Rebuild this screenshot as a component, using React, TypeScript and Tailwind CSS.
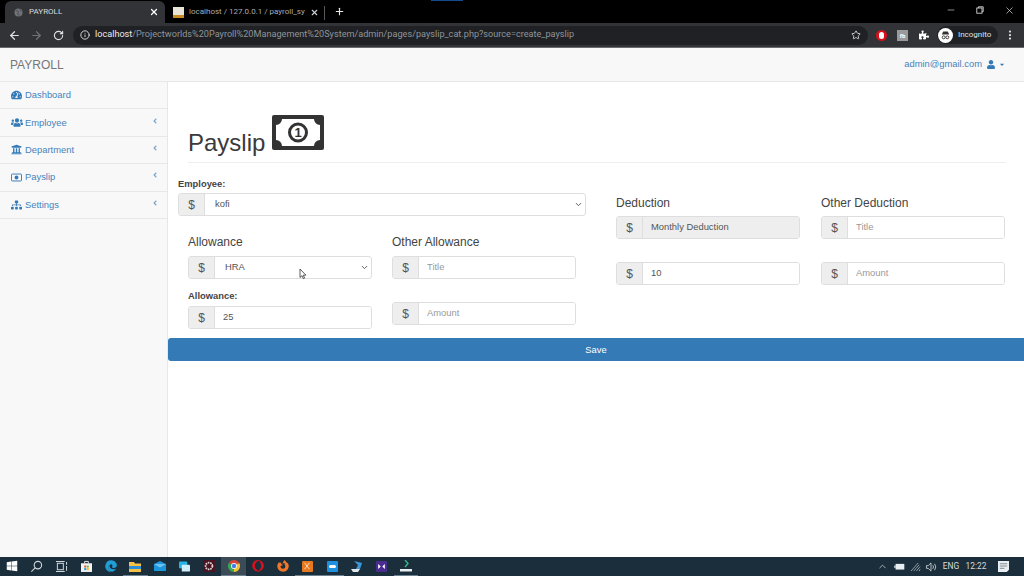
import React from "react";
import { ArrowLeft, ArrowRight, RotateCw, Info, Star, X, Plus, Minus, MoreVertical, ChevronUp, ChevronDown } from "lucide-react";
import { FaTachometerAlt, FaUsers, FaUniversity, FaSitemap, FaAngleLeft, FaUser, FaCaretDown, FaPuzzlePiece, FaWindows, FaFirefoxBrowser, FaEdge, FaOpera } from "react-icons/fa";

const MoneyIcon = ({ className }: { className?: string }) => (
  <svg viewBox="0 0 52 35" className={className}>
    <rect width="52" height="35" rx="2" fill="#333" />
    <path fill="#fff" d="M10 4H42A6 6 0 0 0 48 10V25A6 6 0 0 0 42 31H10A6 6 0 0 0 4 25V10A6 6 0 0 0 10 4Z" />
    <circle cx="26" cy="17.5" r="8.5" fill="#fff" stroke="#333" strokeWidth="3" />
    <text x="26" y="22" textAnchor="middle" fontSize="13" fontWeight="700" fill="#333" fontFamily="Liberation Sans, sans-serif">1</text>
  </svg>
);

const SmallMoney = () => (
  <svg viewBox="0 0 14 10" className="w-[11px] h-[9px]">
    <rect x="0.6" y="0.6" width="12.8" height="8.8" rx="1" fill="none" stroke="#337ab7" strokeWidth="1.2" />
    <circle cx="7" cy="5" r="2.4" fill="#337ab7" />
  </svg>
);

const ChromeLogo = () => (
  <svg viewBox="0 0 12 12" className="w-[12px] h-[12px]">
    <path d="M6 6 .8 3A6 6 0 0 1 11.200 3Z" fill="#d9453a" />
    <path d="M6 6 11.200 3A6 6 0 0 1 6 12Z" fill="#f2c232" />
    <path d="M6 6V12A6 6 0 0 1 .8 3Z" fill="#3aa757" />
    <circle cx="6" cy="6" r="2.900" fill="#fff" />
    <circle cx="6" cy="6" r="2.200" fill="#3f7fe8" />
  </svg>
);

const Group = ({ children, className = "" }: { children: React.ReactNode; className?: string }) => (
  <div className={`flex h-[23px] rounded-[3px] border border-[#dedede] overflow-hidden bg-white ${className}`}>
    <span className="w-[26px] shrink-0 bg-[#eeeeee] border-r border-[#dedede] flex items-center justify-center text-[12px] text-[#555]">$</span>
    {children}
  </div>
);

const Field = ({ value, placeholder, disabled }: { value?: string; placeholder?: string; disabled?: boolean }) => (
  <input
    readOnly
    defaultValue={value}
    placeholder={placeholder}
    disabled={disabled}
    className={`w-full min-w-0 px-2 text-[9.4px] text-[#555] placeholder:text-[#999] outline-none ${disabled ? "bg-[#eeeeee] opacity-100" : "bg-white"}`}
  />
);

const Picker = ({ value }: { value: string }) => (
  <>
    <select defaultValue={value} className="appearance-none flex-1 min-w-0 pl-[10px] text-[9.4px] text-[#555] bg-white outline-none">
      <option>{value}</option>
    </select>
    <span className="w-[13px] shrink-0 flex items-center justify-center">
      <ChevronDown className="w-[9px] h-[9px] text-[#555]" strokeWidth={2.5} />
    </span>
  </>
);

const nav = [
  { label: "Dashboard", icon: <FaTachometerAlt className="w-[11px] h-[10px]" />, arrow: false },
  { label: "Employee", icon: <FaUsers className="w-[12px] h-[11px]" />, arrow: true },
  { label: "Department", icon: <FaUniversity className="w-[11px] h-[11px]" />, arrow: true },
  { label: "Payslip", icon: <SmallMoney />, arrow: true },
  { label: "Settings", icon: <FaSitemap className="w-[11px] h-[10px]" />, arrow: true },
];

const Tile = ({ c, children }: { c: string; children?: React.ReactNode }) => (
  <span className="w-[11px] h-[11px] rounded-[1px] flex items-center justify-center" style={{ background: c }}>{children}</span>
);

const taskIcons: { el: React.ReactNode; line?: boolean; active?: boolean }[] = [
  { el: <FaWindows className="w-[12px] h-[12px] text-white" /> },
  { el: <svg viewBox="0 0 14 14" className="w-[13px] h-[13px]" fill="none" stroke="#cfd6da" strokeWidth="1.2"><circle cx="8.5" cy="5.5" r="4" /><path d="M5.5 8.5 1.5 12.5" /></svg> },
  { el: <svg viewBox="0 0 14 12" className="w-[13px] h-[11px]" fill="none" stroke="#cfd6da" strokeWidth="1.1"><rect x="2.5" y="2.5" width="6.5" height="7" /><path d="M1 .6h9.5M1 11.400h9.500M12.500 1v3M12.500 5.500v5" /></svg> },
  { el: <svg viewBox="0 0 12 13" className="w-[11px] h-[12px]"><path d="M0 3.500h12V13H0z" fill="#f2f2f2" /><path d="M4 3.500V1.500h4v2" fill="none" stroke="#f2f2f2" /><rect x="3.500" y="6" width="2.200" height="2.200" fill="#e8562a" /><rect x="6.300" y="6" width="2.200" height="2.200" fill="#7db53b" /><rect x="3.500" y="8.800" width="2.200" height="2.200" fill="#1d9ad6" /><rect x="6.300" y="8.800" width="2.200" height="2.200" fill="#f4b728" /></svg> },
  { el: <FaEdge className="w-[12px] h-[12px] text-[#1f9fd6]" /> },
  { el: <svg viewBox="0 0 12 11" className="w-[12px] h-[11px]"><path d="M0 1h5l1 1.500h6V11H0z" fill="#f3c246" /><rect x="0" y="5" width="12" height="3" fill="#2c8fd6" /></svg>, line: true },
  { el: <svg viewBox="0 0 12 10" className="w-[12px] h-[10px]"><path d="M0 3 6 0l6 3v7H0z" fill="#1f95dc" /><path d="M0 3l6 3.500L12 3" fill="#6cc3f0" /></svg> },
  { el: <svg viewBox="0 0 12 11" className="w-[11px] h-[11px]"><rect width="9" height="7.500" rx="1" fill="#27b5e6" /><rect x="3" y="3.500" width="9" height="7.500" rx="1" fill="#cfeefa" /></svg> },
  { el: <svg viewBox="0 0 12 12" className="w-[12px] h-[12px]"><rect width="12" height="12" fill="#4a1420" /><circle cx="6" cy="6" r="3.400" fill="none" stroke="#d8d8d8" strokeWidth="1.800" strokeDasharray="1.600 .8" /></svg> },
  { el: <ChromeLogo />, active: true, line: true },
  { el: <FaOpera className="w-[12px] h-[12px] text-[#d4121e]" /> },
  { el: <FaFirefoxBrowser className="w-[12px] h-[12px] text-[#f0762a]" /> },
  { el: <Tile c="#e9791f"><svg viewBox="0 0 10 10" className="w-[8px] h-[8px]" fill="none" stroke="#f8dcc0" strokeWidth="1.200"><path d="M2 1 8 9M8 1 2 9" /></svg></Tile>, line: true },
  { el: <Tile c="#1f8fe0"><span className="w-[7px] h-[3px] bg-white rounded-full" /></Tile>, line: true },
  { el: <svg viewBox="0 0 12 11" className="w-[12px] h-[11px]"><path d="M3 0 11 2 9 8H5L7 4Z" fill="#3d9ad6" /><path d="M0 8h9l-2 3H2z" fill="#dfe7ec" /></svg> },
  { el: <Tile c="#4a2c91"><svg viewBox="0 0 8 6" className="w-[7px] h-[5px]" fill="#fff"><path d="M0 0l3 3-3 3zM8 0 5 3l3 3z" /></svg></Tile> },
  { el: <svg viewBox="0 0 12 12" className="w-[12px] h-[12px]"><path d="M5 0l3 3.500L5 7" fill="none" stroke="#33b98a" strokeWidth="1.400" /><path d="M0 9h12v2.500H0z" fill="#e8eef1" /></svg>, line: true },
];

export default function App() {
  return (
    <div className="w-[1024px] h-[576px] overflow-hidden flex flex-col bg-white font-['Liberation_Sans',Arial,sans-serif] text-[#333]">
      {/* tab strip */}
      <div className="h-[23px] shrink-0 bg-black flex items-end pl-[5px] text-[8px] font-['Roboto',sans-serif]">
        <div className="w-[160px] h-[22px] bg-[#323336] rounded-t-[6px] flex items-center pl-[9px] pr-[6px] text-[#d8dadd]">
          <svg viewBox="0 0 10 10" className="w-[9px] h-[9px]"><circle cx="5" cy="5" r="4.500" fill="#6f7276" /><path d="M2 2.500 5 4 4 7 6.500 8M6 1l2 3" stroke="#4a4c50" fill="none" /></svg>
          <span className="ml-[6px] flex-1">PAYROLL</span>
          <X className="w-[10px] h-[10px] text-white" strokeWidth={3} />
        </div>
        <div className="w-[156px] h-[22px] ml-[7px] flex items-center pl-[1px] text-[#a9acb0]">
          <span className="w-[11px] h-[11px] bg-[#e9e4d8] border-b-[3px] border-[#c98a22] shrink-0" />
          <span className="ml-[5px] w-[120px] whitespace-nowrap">localhost / 127.0.0.1 / payroll_sy</span>
          <X className="w-[9px] h-[9px] ml-[1px] text-[#d0d2d5]" strokeWidth={3} />
        </div>
        <div className="w-px h-[14px] bg-[#55575b] mb-[3px] -ml-[4px]" />
        <Plus className="w-[11px] h-[11px] text-[#e8eaed] ml-[9px] mb-[6px]" strokeWidth={2.5} />
        <div className="flex-1 h-full flex items-start">
          <div className="ml-[86px] w-[32px] h-px bg-[#174a8c]" />
        </div>
        <div className="flex self-stretch items-center text-[#d8dadd] pb-[3px]">
          <Minus className="w-[10px] h-[10px] mr-[20px]" strokeWidth={1.5} />
          <svg viewBox="0 0 10 10" className="w-[8px] h-[8px] mr-[20px]" fill="none" stroke="currentColor" strokeWidth="1.100"><rect x="1" y="2.500" width="6.500" height="6.500" /><path d="M3 2.500V1h6v6H7.500" /></svg>
          <X className="w-[11px] h-[11px] mr-[9px]" strokeWidth={1.5} />
        </div>
      </div>
      {/* toolbar */}
      <div className="h-[25px] shrink-0 bg-[#323336] border-b border-[#6a6b6e] flex items-center pl-[8px] font-['Roboto',sans-serif]">
        <ArrowLeft className="w-[13px] h-[13px] text-[#dfe1e4]" strokeWidth={2.2} />
        <ArrowRight className="w-[13px] h-[13px] ml-[9px] text-[#6f7175]" strokeWidth={2.2} />
        <RotateCw className="w-[11px] h-[11px] ml-[10px] text-[#dfe1e4]" strokeWidth={2.4} />
        <div className="ml-[9px] w-[795px] h-[19px] rounded-full bg-[#202124] flex items-center pl-[7px] pr-[7px]">
          <Info className="w-[10px] h-[10px] text-[#dfe1e4]" strokeWidth={2.2} />
          <span className="ml-[5px] flex-1 whitespace-nowrap text-[9.15px] text-[#8f959b]"><span className="text-[#e8eaed]">localhost</span>/Projectworlds%20Payroll%20Management%20System/admin/pages/payslip_cat.php?source=create_payslip</span>
          <Star className="w-[10px] h-[10px] text-[#dfe1e4]" strokeWidth={2} />
        </div>
        <span className="ml-[8px] w-[11px] h-[11px] rounded-full bg-[#d8101a] flex items-center justify-center"><span className="w-[5px] h-[7px] rounded-full bg-white" /></span>
        <span className="ml-[10px] w-[11px] h-[11px] bg-[#9a9a9a] text-[6px] leading-[11px] text-center text-white font-bold">fb</span>
        <FaPuzzlePiece className="ml-[11px] w-[10px] h-[10px] text-white" />
        <div className="ml-[8px] w-[61px] h-[18px] rounded-full bg-[#202124] flex items-center pl-[1px] text-[8px] text-[#dfe1e4]">
          <span className="w-[15px] h-[15px] rounded-full bg-white flex items-center justify-center">
            <svg viewBox="0 0 12 12" className="w-[11px] h-[11px]"><path d="M2 5h8L8.500 1.500h-5z" fill="#333" /><circle cx="4" cy="8" r="1.600" fill="none" stroke="#333" /><circle cx="8" cy="8" r="1.600" fill="none" stroke="#333" /></svg>
          </span>
          <span className="ml-[5px]">Incognito</span>
        </div>
        <MoreVertical className="ml-[6px] w-[12px] h-[12px] text-[#dfe1e4]" strokeWidth={2.5} />
      </div>
      {/* navbar */}
      <div className="h-[34px] shrink-0 bg-[#f8f8f8] border-b border-[#e7e7e7] flex items-center justify-between pl-[10px] pr-[19px]">
        <span className="text-[12px] text-[#777] mt-[1px]">PAYROLL</span>
        <span className="flex items-center text-[9.4px] text-[#4583bb]">
          admin@gmail.com
          <FaUser className="ml-[5px] w-[8px] h-[9px] text-[#337ab7]" />
          <FaCaretDown className="ml-[4px] w-[6px] h-[7px] text-[#337ab7]" />
        </span>
      </div>
      {/* body */}
      <div className="flex-1 min-h-0 flex">
        <aside className="w-[168px] shrink-0 bg-[#f8f8f8] border-r border-[#e7e7e7]">
          {nav.map((n) => (
            <div key={n.label} className="h-[27.4px] border-b border-[#e7e7e7] flex items-center pl-[11px] pr-[9px] text-[9.4px] text-[#4583bb]">
              <span className="w-[14px] flex items-center text-[#337ab7]">{n.icon}</span>
              <span className="flex-1">{n.label}</span>
              {n.arrow && <FaAngleLeft className="w-[6px] h-[8px] mb-[4px] text-[#7aa5cc]" />}
            </div>
          ))}
        </aside>
        <main className="relative flex-1 min-w-0 flex flex-col">
          <div className="mt-[33px] ml-[20px] mr-[18px] h-[48px] border-b border-[#eeeeee] flex items-start">
            <h1 className="text-[24px] leading-[27px] mt-[14px] text-[#3a3a3a]">Payslip</h1>
            <MoneyIcon className="ml-[7px] w-[52px] h-[35px]" />
          </div>
          <div className="flex ml-[10px]">
            <div className="w-[408px]">
              <label className="block mt-[13px] text-[9.4px] leading-[15px] font-bold text-[#444]">Employee:</label>
              <Group className="mt-[2px]"><Picker value="kofi" /></Group>
              <div className="flex ml-[10px] gap-[20px] mt-[18px]">
                <div className="w-[184px]">
                  <h4 className="text-[12px] leading-[16px] h-[22px] text-[#444]">Allowance</h4>
                  <Group><Picker value="HRA" /></Group>
                  <label className="block mt-[9px] text-[9.4px] leading-[15px] font-bold text-[#444]">Allowance:</label>
                  <Group className="mt-[3px]"><Field value="25" /></Group>
                </div>
                <div className="w-[184px]">
                  <h4 className="text-[12px] leading-[16px] h-[22px] text-[#444]">Other Allowance</h4>
                  <Group><Field placeholder="Title" /></Group>
                  <Group className="mt-[23px]"><Field placeholder="Amount" /></Group>
                </div>
              </div>
            </div>
            <div className="ml-[30px] mt-[33px] flex gap-[21px]">
              <div className="w-[184px]">
                <h4 className="text-[12px] leading-[14px] h-[20px] text-[#444]">Deduction</h4>
                <Group><Field value="Monthly Deduction" disabled /></Group>
                <Group className="mt-[23px]"><Field value="10" /></Group>
              </div>
              <div className="w-[184px]">
                <h4 className="text-[12px] leading-[14px] h-[20px] text-[#444]">Other Deduction</h4>
                <Group><Field placeholder="Title" /></Group>
                <Group className="mt-[23px]"><Field placeholder="Amount" /></Group>
              </div>
            </div>
          </div>
          <button className="mt-[9px] h-[23px] w-full bg-[#337ab7] rounded-l-[3px] text-white text-[9.4px] leading-none">Save</button>
          <svg viewBox="0 0 8 12" className="absolute left-[131px] top-[186px] w-[8px] h-[12px]">
            <path d="M1 1v8.500l2-1.800 1.300 3 1.300-.6-1.300-2.900h2.600Z" fill="#fff" stroke="#333" strokeWidth=".8" />
          </svg>
        </main>
      </div>
      {/* taskbar */}
      <div className="h-[19px] shrink-0 bg-[#1b2e3b] flex items-stretch font-['Roboto',sans-serif] text-[8.4px] text-[#d5dbdf]">
        {taskIcons.map((t, i) => (
          <div key={i} className={`w-[24.6px] flex items-center justify-center border-b ${t.active ? "bg-[#3c4c57]" : ""} ${t.line ? "border-[#6d8290]" : "border-transparent"}`}>
            {t.el}
          </div>
        ))}
        <div className="flex-1" />
        <div className="flex items-center pr-[15px]">
          <ChevronUp className="w-[11px] h-[11px] mr-[6px]" strokeWidth={1.6} />
          <svg viewBox="0 0 12 8" className="w-[11px] h-[7px] mr-[5px]"><rect x="1.500" y="1" width="10" height="6.500" fill="#e8eef1" /><rect y="3" width="1.500" height="2.500" fill="#e8eef1" /></svg>
          <svg viewBox="0 0 12 11" className="w-[11px] h-[10px] mr-[4.500px]" fill="none" stroke="#aab4ba" strokeWidth=".9"><path d="M1 10 9 1M4 10 10 3M7 10 11 5M10 10 11 8" /></svg>
          <svg viewBox="0 0 12 11" className="w-[12px] h-[10px] mr-[4px]" fill="none" stroke="#d5dbdf" strokeWidth=".9"><path d="M1 4h2l3-3v9L3 7H1zM8 3.500q1.500 2 0 4M10 2q2.500 3.500 0 7" /></svg>
          <span className="w-[20px] text-center">ENG</span>
          <span className="ml-[3px] w-[24px] text-center">12:22</span>
          <svg viewBox="0 0 12 12" className="ml-[10px] w-[11px] h-[11px]"><path d="M0 0h12v9.500l-2.500 2.500H0z" fill="#e8eef1" /><path d="M2 3h8M2 5.500h8M2 8h5" stroke="#6d7a83" strokeWidth=".9" /></svg>
        </div>
      </div>
    </div>
  );
}
